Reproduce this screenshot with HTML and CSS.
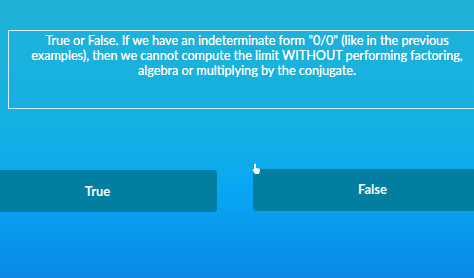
FILE: index.html
```html
<!DOCTYPE html>
<html lang="en">
<head>
  <meta charset="UTF-8">
  <meta name="viewport" content="width=device-width, initial-scale=1.0">
  <title>Quiz</title>
  <link rel="stylesheet" href="styles.css">
</head>
<body>
  <!-- Question -->
  <div class="question">
    True or False. If we have an indeterminate form "0/0" (like in the previous examples), then we cannot compute the limit WITHOUT performing factoring, algebra or multiplying by the conjugate.
  </div>

  <!-- Answers -->
  <div class="answers">
    <div class="answer">True</div>
    <div class="answer">False</div>
  </div>

  <svg class="cursor" width="9" height="12" viewBox="0 0 9 12">
    <path d="M2 1 Q3 0 4 1 L4 5 L7 5.5 Q8.5 6 8 8 L7 11 L3 11 L0.5 7 Q0.5 6 1.8 6.5 L2 7 Z" fill="#fff"/>
  </svg>
</body>
</html>
```

FILE: styles.css
```css
/* Global Styles */
html, body {
  height: 100%;
}
body {
  margin: 0;
  padding: 0;
  overflow: hidden;
  position: relative;
  font-family: 'Lato', 'Open Sans', sans-serif;
  color: #fff;
  background: linear-gradient(180deg, #1fb2d6 0%, #14b1e4 45%, #08a6f2 70%, #0a88e8 100%);
}

/* Question */
.question {
  box-sizing: border-box;
  width: 478px;
  height: 79px;
  margin: 30px 0 0 8px;
  padding: 2px 10px 0;
  border: 1.5px solid rgba(235, 250, 255, 0.9);
  font-size: 12.65px;
  line-height: 15px;
  text-align: center;
  text-shadow: 0 0 0.4px #fff;
}

/* Answers */
.answers {
  display: flex;
  gap: 36px;
  margin: 61px 0 0 -22px;
}
.answer {
  width: 239px;
  height: 42px;
  flex-shrink: 0;
  display: flex;
  align-items: center;
  justify-content: center;
  background-color: #027ea1;
  border-radius: 3px;
  font-size: 13px;
  font-weight: bold;
}
.answer + .answer {
  margin-top: -1px;
  padding-bottom: 3px;
  box-sizing: border-box;
}

.cursor {
  position: absolute;
  left: 252px;
  top: 163px;
}
```
